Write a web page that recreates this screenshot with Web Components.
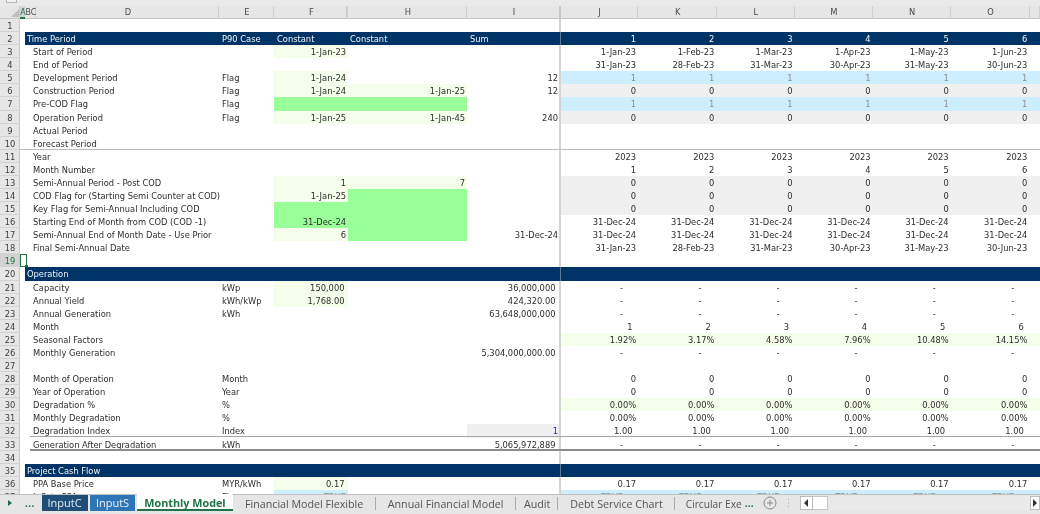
<!DOCTYPE html>
<html><head><meta charset="utf-8"><style>
html,body{margin:0;padding:0;background:#fff;overflow:hidden}
body{font-family:"DejaVu Sans","Noto Sans",sans-serif;color:#333}
</style></head><body>
<x-workbook>
  <x-col-header slot="head"></x-col-header>
  <x-sheet slot="sheet"></x-sheet>
  <x-tabbar slot="tabs">
    <x-tab kind="dark">InputC</x-tab>
    <x-tab kind="blue">InputS</x-tab>
    <x-tab kind="active">Monthly Model</x-tab>
    <x-tab>Financial Model Flexible</x-tab>
    <x-tab>Annual Financial Model</x-tab>
    <x-tab kind="tight">Audit</x-tab>
    <x-tab>Debt Service Chart</x-tab>
    <x-tab kind="last">Circular Exe</x-tab>
  </x-tabbar>
</x-workbook>
<script>
const COLS='20px 5px 194px 55px 74px 119px 93px 78.1px 78.3px 78.1px 78.1px 78.1px 78.7px 1fr';
const CELLFONT='font-family:"DejaVu Sans",sans-serif;font-stretch:condensed;font-size:9.25px;line-height:13px';
class XWorkbook extends HTMLElement{constructor(){super();this.attachShadow({mode:'open'}).innerHTML=`<style>
:host{display:flex;flex-direction:column;width:1040px;height:514px;overflow:hidden;background:#fff;filter:blur(.3px)}
.top{height:6px;background:#e9e9e9;flex:none;display:flex;padding-left:6px}
.top i{display:block;width:9px;height:2px;border:1px solid #b5b5b5;border-top:0;background:#f4f4f4}
.main{flex:1;min-height:0;overflow:hidden}
</style><div class="top"><i></i></div><slot name="head"></slot><div class="main"><slot name="sheet"></slot></div><slot name="tabs"></slot>`}}
class XColHeader extends HTMLElement{constructor(){super();const L=[['',0],['A',1],['B',1],['C',1],['D'],['E'],['F'],['H'],['I'],['J'],['K'],['L'],['M'],['N'],['O'],['']];
const cols='20px 5.4px 5px 6px 183px 55px 74px 119px 93px 78.1px 78.3px 78.1px 78.1px 78.1px 78.7px 1fr';
this.attachShadow({mode:'open'}).innerHTML=`<style>
:host{display:grid;grid-template-columns:${cols};height:13px;flex:none;background:#e6e6e6;${CELLFONT};line-height:12px;color:#4a4a4a;box-shadow:inset 0 -1px #c4c4c4}
div{text-align:center;position:relative;box-shadow:inset -1px 0 #cfcfcf,inset 0 -1px #c4c4c4;overflow:visible;white-space:nowrap}
.n{box-shadow:inset 0 -1px #c4c4c4;font-size:8.8px;letter-spacing:-.3px}
.a{color:#1e7145;box-shadow:inset 0 -2px #217346;background:#d2d2d2}
.c{box-shadow:inset -1px 0 #cfcfcf,inset 0 -1px #c4c4c4}
.c0::after{content:"";position:absolute;right:1px;bottom:2px;border:4px solid transparent;border-right-color:#bdbdbd;border-bottom-color:#bdbdbd}
.f{box-shadow:inset -2px 0 #cfcfcf,inset 0 -1px #c4c4c4}
.frz{box-shadow:inset -1px 0 #c8c8c8,inset 0 -1px #c4c4c4}
.af{box-shadow:inset 1px 0 #c8c8c8,inset -1px 0 #cfcfcf,inset 0 -1px #c4c4c4}
</style>`+L.map((x,i)=>`<div class="${i==0?'c0':i==1?'n a':i==2?'n':i==3?'n c':x[0]=='F'?'f':x[0]=='I'?'frz':x[0]=='J'?'af':''}">${x[0]}</div>`).join('')}}
class XRow extends HTMLElement{
  set data(d){
    const cell=(t,c)=>`<div class="${c||''}">${t==null?'':t}</div>`;
    const jo=d.jo||[];
    let h=`<style>
:host{display:grid;grid-template-columns:${COLS};height:13.08px;position:relative;${CELLFONT};color:#2e2e2e;background:#fff}
div{white-space:nowrap;overflow:visible;min-width:0;box-sizing:border-box;height:100%}
.rh{background:#e6e6e6;color:#404040;text-align:center;box-shadow:inset 0 -1px #d2d2d2,inset -1px 0 #c8c8c8}
.sel{background:#d2d2d2;color:#217346}
.l{padding-left:8px}.hd{padding-left:2px}
.e{padding-left:3px}.h2{padding-left:2px}.h3{padding-left:3px}
.r{text-align:right;padding-right:2px}
.p5{padding-right:5.5px}.p15{padding-right:15px}.p3{padding-right:3.5px}.p4{padding-right:4.5px}
.lg{background:#f5fdeb}.bg{background:#99ff99}.bl{background:#cceeff}.gr{background:#f0f0f0}
.m{color:#8f8f8f}.t{color:#1a1ae0}
.i{box-shadow:inset -1px 0 #d4d4d4}
.j{box-shadow:inset 1px 0 #d4d4d4}
.nv{background:#003366;color:#eef3f8}.nv.j,.nv.i{box-shadow:none}.nv.j{box-shadow:inset 1px 0 #5a7a99}
.line{position:absolute;right:0;height:1px;bottom:0;left:20px;background:#bdbdbd;padding:0}
.l32{left:30px;background:#a6a6a6;bottom:1px}
.l33{left:30px;height:2px;background:#8c8c8c}
.cur{position:absolute;left:20px;top:0;width:6.5px;height:13px;border:1px solid #217346;box-sizing:border-box;background:#fff}
.cur::after{content:"";position:absolute;right:-2px;bottom:-2px;width:3px;height:3px;background:#217346}
</style>`;
    const nv=d.navy?'nv':'';
    h+=cell(d.n,'rh'+(d.sel?' sel':''));
    h+=cell('','');
    h+=cell(d.b,(d.hd?'hd ':'l ')+nv);
    h+=cell(d.e,'e '+nv);
    h+=cell(d.f,(d.navy?'h3 ':'r '+(d.fp||''))+' '+(d.fc||'')+' '+nv);
    h+=cell(d.h,(d.navy?'h2 ':'r ')+' '+(d.hc||'')+' '+nv);
    h+=cell(d.i,(d.navy?'h3 ':'r '+(d.ip||''))+' i '+(d.ic||'')+' '+nv);
    for(let k=0;k<6;k++)h+=cell(jo[k],'r '+(d.jp||'')+' '+(d.jc||'')+' '+nv+(k==0?' j':''));
    h+=cell('',(d.jc||nv));
    if(d.line)h+=`<div class="line ${d.line}"></div>`;
    if(d.sel)h+=`<div class="cur"></div>`;
    (this.shadowRoot||this.attachShadow({mode:'open'})).innerHTML=h;
  }
}
const rep=(v)=>[v,v,v,v,v,v];
const seq=[1,2,3,4,5,6];
const sod=['1-Jan-23','1-Feb-23','1-Mar-23','1-Apr-23','1-May-23','1-Jun-23'];
const eod=['31-Jan-23','28-Feb-23','31-Mar-23','30-Apr-23','31-May-23','30-Jun-23'];
const ROWS=[
{},
{b:'Time Period',hd:1,navy:1,e:'P90 Case',f:'Constant',h:'Constant',i:'Sum',jo:seq},
{b:'Start of Period',f:'1-Jan-23',fc:'lg',jo:sod},
{b:'End of Period',jo:eod},
{b:'Development Period',e:'Flag',f:'1-Jan-24',fc:'lg',i:'12',jo:rep(1),jc:'bl m'},
{b:'Construction Period',e:'Flag',f:'1-Jan-24',fc:'lg',h:'1-Jan-25',hc:'lg',i:'12',jo:rep(0),jc:'gr'},
{b:'Pre-COD Flag',e:'Flag',fc:'bg',hc:'bg',jo:rep(1),jc:'bl m'},
{b:'Operation Period',e:'Flag',f:'1-Jan-25',fc:'lg',h:'1-Jan-45',hc:'lg',i:'240',jo:rep(0),jc:'gr'},
{b:'Actual Period'},
{b:'Forecast Period',line:'l10'},
{b:'Year',jo:rep(2023)},
{b:'Month Number',jo:seq},
{b:'Semi-Annual Period - Post COD',f:'1',fc:'lg',h:'7',hc:'lg',jo:rep(0),jc:'gr'},
{b:'COD Flag for (Starting Semi Counter at COD)',f:'1-Jan-25',fc:'lg',hc:'bg',jo:rep(0),jc:'gr'},
{b:'Key Flag for Semi-Annual Including COD',fc:'bg',hc:'bg',jo:rep(0),jc:'gr'},
{b:'Starting End of Month from COD (COD -1)',f:'31-Dec-24',fc:'bg',hc:'bg',jo:rep('31-Dec-24')},
{b:'Semi-Annual End of Month Date - Use Prior',f:'6',fc:'lg',hc:'bg',i:'31-Dec-24',jo:rep('31-Dec-24')},
{b:'Final Semi-Annual Date',jo:eod},
{sel:1},
{b:'Operation',hd:1,navy:1},
{b:'Capacity',e:'kWp',f:'150,000',fc:'lg',fp:'p3',i:'36,000,000',ip:'p4',jo:rep('-'),jp:'p15'},
{b:'Annual Yield',e:'kWh/kWp',f:'1,768.00',fc:'lg',fp:'p3',i:'424,320.00',ip:'p4',jo:rep('-'),jp:'p15'},
{b:'Annual Generation',e:'kWh',i:'63,648,000,000',ip:'p4',jo:rep('-'),jp:'p15'},
{b:'Month',jo:seq,jp:'p5'},
{b:'Seasonal Factors',jo:['1.92%','3.17%','4.58%','7.96%','10.48%','14.15%'],jc:'lg'},
{b:'Monthly Generation',i:'5,304,000,000.00',ip:'p4',jo:rep('-'),jp:'p15'},
{},
{b:'Month of Operation',e:'Month',jo:rep(0)},
{b:'Year of Operation',e:'Year',jo:rep(0)},
{b:'Degradation %',e:'%',jo:rep('0.00%'),jc:'lg'},
{b:'Monthly Degradation',e:'%',jo:rep('0.00%')},
{b:'Degradation Index',e:'Index',i:'1',ic:'gr t',jo:rep('1.00'),jp:'p5',line:'l32'},
{b:'Generation After Degradation',e:'kWh',i:'5,065,972,889',ip:'p4',jo:rep('-'),jp:'p15',line:'l33'},
{},
{b:'Project Cash Flow',hd:1,navy:1},
{b:'PPA Base Price',e:'MYR/kWh',f:'0.17',fc:'lg',fp:'p3',jo:rep('0.17')},
{b:'Inflate PPA',e:'Flag',f:'TRUE',fc:'bl m',jo:rep('TRUE'),jc:'bl m',jp:'p15'},
];
class XSheet extends HTMLElement{constructor(){super();const s=this.attachShadow({mode:'open'});s.innerHTML=`<style>:host{display:block}</style>`;
ROWS.forEach((r,i)=>{const e=document.createElement('x-row');e.data=Object.assign({n:i+1},r);s.appendChild(e)})}}
class XTab extends HTMLElement{constructor(){super();this.attachShadow({mode:'open'}).innerHTML=`<style>
:host{display:flex;align-items:center;height:19px;box-sizing:border-box;padding:0 12.5px 0 12px;font:10.7px/18px "Open Sans",sans-serif;color:#555;white-space:nowrap;position:relative}
:host(:not([kind=dark]):not([kind=blue]):not([kind=active]):not([kind=last]))::after{content:"";position:absolute;right:0;top:3px;height:13px;width:1px;background:#ababab}
:host([kind=tight]){padding:0 8px}
:host([kind=dark]){background:#1f4e79;color:#e4ecf3;padding:0;height:16px;margin:1px 2.5px 0 0;width:46px;justify-content:center;font-size:11px}
:host([kind=blue]){background:#2e75b6;color:#eef4fa;padding:0;height:16px;margin:1px 2px 0 0;width:45px;justify-content:center;font-size:11px}
:host([kind=active]){background:#fff;color:#217346;font-weight:700;padding:0;width:96px;justify-content:center;box-shadow:inset 0 -2px #217346;height:17px;font-size:10.8px}
:host([kind=last]){padding:0 3px 0 10.5px;font-size:10.2px}
</style><slot></slot>`}}
class XTabBar extends HTMLElement{constructor(){super();this.attachShadow({mode:'open'}).innerHTML=`<style>
:host{display:flex;align-items:flex-start;height:20px;flex:none;background:#e6e6e6;box-shadow:inset 0 1px #c0c0c0;position:relative;overflow:hidden}
.nav{width:41.5px;height:18px;flex:none;display:flex;align-items:center;color:#217346;font:700 10px/14px "Open Sans",sans-serif}
.tabs{display:flex;align-items:flex-start;flex:none}
.more{color:#217346;font:700 10px/18px "Open Sans",sans-serif;width:16px;flex:none;letter-spacing:.2px}
.scroll{flex:1;display:flex;align-items:center;height:16px;margin-top:1px;min-width:0}
.sb{width:13px;height:14px;background:#fff;border:1px solid #bdbdbd;box-sizing:border-box;display:flex;align-items:center;justify-content:center;flex:none}
.th{width:15px;height:14px;background:#fff;border:1px solid #c6c6c6;border-left:0;box-sizing:border-box;flex:none}
.tr{flex:1;height:14px;background:#e9e9e9}
svg{display:block;flex:none}
</style>
<div class="nav"><svg width="25" height="18" viewBox="0 0 25 18"><path d="M8 6l4 3-4 3z" fill="#1f6b45"/></svg><span style="letter-spacing:.4px">...</span></div>
<div class="tabs"><slot></slot></div>
<div class="more">...</div>
<svg width="24" height="18" viewBox="0 0 24 18" style="margin-left:-3px"><circle cx="12" cy="9" r="6" fill="none" stroke="#8a8a8a"/><path d="M12 6v6M9 9h6" stroke="#8a8a8a"/></svg>
<svg width="14" height="18" viewBox="0 0 14 18"><path d="M6 5h1v1h-1zM6 8.500h1v1h-1zM6 12h1v1h-1z" fill="#a0a0a0"/></svg>
<div class="scroll" style="margin-left:4px">
<div class="sb"><svg width="6" height="8" viewBox="0 0 6 8"><path d="M5 0v8L1 4z" fill="#333"/></svg></div>
<div class="th"></div><div class="tr"></div>
<div class="sb" style="width:10px"><svg width="6" height="8" viewBox="0 0 6 8"><path d="M1 0v8l4-4z" fill="#333"/></svg></div>
</div>`}}
customElements.define('x-workbook',XWorkbook);
customElements.define('x-col-header',XColHeader);
customElements.define('x-row',XRow);
customElements.define('x-sheet',XSheet);
customElements.define('x-tab',XTab);
customElements.define('x-tabbar',XTabBar);
</script>
</body></html>
